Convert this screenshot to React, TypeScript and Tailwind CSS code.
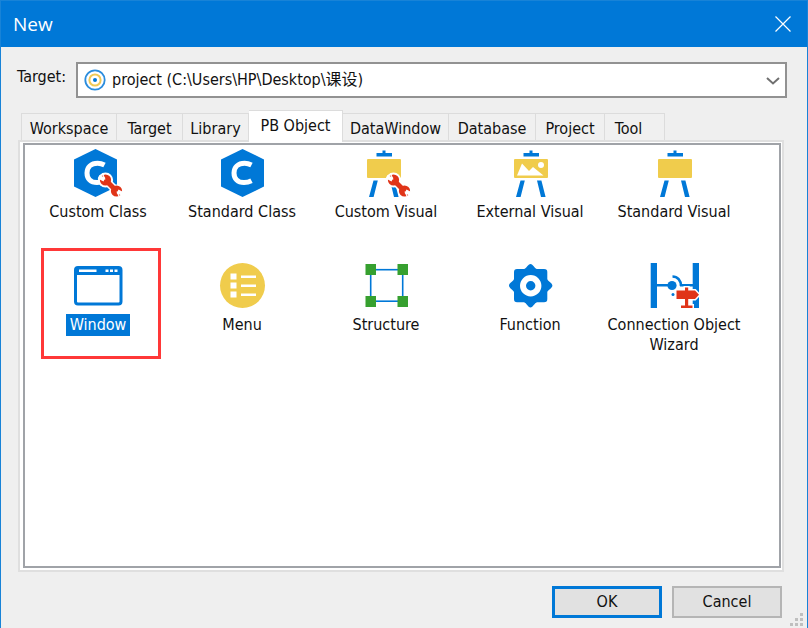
import { useState } from 'react'
import type { ReactNode } from 'react'
import clsx from 'clsx'

const BLUE = '#0078d7'
const YELLOW = '#f0cc4c'
const RED = '#e03418'

function Icon({ children }: { children: ReactNode }) {
  return (
    <svg viewBox="0 0 48 48" className="h-12 w-12 overflow-visible" aria-hidden="true">
      {children}
    </svg>
  )
}

function Wrench() {
  return (
    <>
      <path d="M31.5 31 L43 42.5" stroke="#fff" strokeWidth="8" />
      <circle cx="31.5" cy="31" r="7.6" fill="#fff" />
      <circle cx="42.5" cy="42" r="6.4" fill="#fff" />
      <circle cx="31.5" cy="31" r="5.6" fill={RED} />
      <circle cx="42.5" cy="42" r="5.6" fill={RED} />
      <path d="M31.5 31 L43 42.5" stroke={RED} strokeWidth="5" />
      <path d="M24.6 27.8 L30.4 30.6 M49.4 45.2 L43.6 42.4" stroke="#fff" strokeWidth="4" />
      <path d="M28.4 24.5 L31 30.4 M45.6 48.5 L43 42.6" stroke="#fff" strokeWidth="1.2" />
    </>
  )
}

function Hexagon({ x }: { x: number }) {
  return (
    <g transform={`translate(${x} 0)`}>
      <path d="M21.5 0 L43 10.5 V37.5 L21.5 48 L0 37.5 V10.5 Z" fill={BLUE} />
      <path
        d="M30.5 16 C28.2 14.8 26 14.2 23.6 14.2 C17 14.2 13 18.4 13 24 C13 30 16.8 33.6 23 33.6 C25.8 33.6 28.2 33 30.5 31.8"
        fill="none"
        stroke="#fff"
        strokeWidth="5"
      />
    </g>
  )
}

function Easel({ x, children }: { x: number; children?: ReactNode }) {
  return (
    <g transform={`translate(${x} 0)`}>
      <path d="M15.5 1.5 H18.5 V4 H25 V7.5 H9.5 V4 H15.5 Z" fill={BLUE} />
      <rect x="0" y="10" width="34" height="19" rx="1" fill={YELLOW} />
      <path d="M6.5 31.5 H10.8 L6.6 48 H2 Z M23 31.5 H27.4 L31.6 48 H27 Z" fill={BLUE} />
      {children}
    </g>
  )
}

const items: { name: string; icon: ReactNode }[] = [
  {
    name: 'Custom Class',
    icon: (
      <>
        <Hexagon x={0} />
        <Wrench />
      </>
    ),
  },
  { name: 'Standard Class', icon: <Hexagon x={3} /> },
  {
    name: 'Custom Visual',
    icon: (
      <>
        <Easel x={5} />
        <Wrench />
      </>
    ),
  },
  {
    name: 'External Visual',
    icon: (
      <Easel x={8}>
        <path d="M3 26.5 L8 14.5 L15 22 L19 18 L29.5 26.5 Z" fill="#fff" />
        <circle cx="27" cy="16" r="3" fill="#fff" />
      </Easel>
    ),
  },
  { name: 'Standard Visual', icon: <Easel x={8} /> },
  {
    name: 'Window',
    icon: (
      <>
        <rect x="1.5" y="5.5" width="45.5" height="36.5" rx="2.5" fill="#fff" stroke={BLUE} strokeWidth="3" />
        <rect x="1.5" y="5" width="45.5" height="8" fill={BLUE} />
        <path d="M5 7.5 H22.5 V10 H5 Z M31.5 7.5 H34.5 V10 H31.5 Z M36 7.5 H39 V10 H36 Z M40.5 7.5 H43.5 V10 H40.5 Z" fill="#fff" />
      </>
    ),
  },
  {
    name: 'Menu',
    icon: (
      <>
        <circle cx="24.5" cy="23.5" r="22.5" fill={YELLOW} />
        <path
          d="M12.5 11.5 H18.5 V17.5 H12.5 Z M12.5 20.5 H18.5 V26.5 H12.5 Z M12.5 29.5 H18.5 V35.5 H12.5 Z M23 13.5 H38 V16 H23 Z M23 22.5 H38 V25 H23 Z M23 31.5 H38 V34 H23 Z"
          fill="#fff"
        />
      </>
    ),
  },
  {
    name: 'Structure',
    icon: (
      <>
        <rect x="8.7" y="7.7" width="32" height="31.5" fill="none" stroke={BLUE} strokeWidth="1.6" />
        <path d="M3.5 2 H14 V13 H3.5 Z M35.5 2 H46 V13 H35.5 Z M3.5 34 H14 V45 H3.5 Z M35.5 34 H46 V45 H35.5 Z" fill="#36a02f" />
      </>
    ),
  },
  {
    name: 'Function',
    icon: (
      <>
        <path
          d="M24.5 2 C27 2 28.5 6.5 31 7 H38 C40.5 7 41.3 8 41.3 10 V17 C42 19.5 46.4 21 46.4 23.6 C46.4 26.2 42 28 41.3 30 V37 C41.3 39.4 40.5 40.3 38 40.3 H31 C28.5 41 27 45.4 24.5 45.4 C22 45.4 20.5 41 18 40.3 H11 C9 40.3 8 39.4 8 37 V30 C7.2 28 3 26.2 3 23.6 C3 21 7.2 19.5 8 17 V10 C8 8 9 7 11 7 H18 C20.5 6.5 22 2 24.5 2 Z"
          fill={BLUE}
        />
        <circle cx="24.7" cy="23.7" r="7.7" fill={BLUE} stroke="#fff" strokeWidth="6" />
      </>
    ),
  },
  {
    name: 'Connection Object Wizard',
    icon: (
      <>
        <path d="M0.7 1 H7 V46 H0.7 Z M42.7 1 H49 V46 H42.7 Z M7 22 H18 V24.5 H7 Z M30 22 H43 V24.5 H30 Z" fill={BLUE} />
        <circle cx="22" cy="23.5" r="4.6" fill={BLUE} />
        <path d="M22.5 14.5 C27.5 14.5 31 18.5 31 24" fill="none" stroke={BLUE} strokeWidth="2.6" />
        <circle cx="23" cy="32.5" r="1.5" fill={BLUE} />
        <path
          d="M26.5 28.5 H35 V25.5 H38.2 V28.5 H45 L49 32.7 L45 37 H38.2 V43.5 H42.5 V46 H31 V43.5 H35 V37 H26.5 Z"
          fill={RED}
          stroke="#fff"
          strokeWidth="3"
          paintOrder="stroke"
        />
      </>
    ),
  },
]

const tabs = [
  { name: 'Workspace', width: 'w-24' },
  { name: 'Target', width: 'w-[66px]' },
  { name: 'Library', width: 'w-[66px]' },
  { name: 'PB Object', width: 'w-[94px]' },
  { name: 'DataWindow', width: 'w-[106px]' },
  { name: 'Database', width: 'w-[87px]' },
  { name: 'Project', width: 'w-[69px]' },
  { name: 'Tool', width: 'w-[60px]' },
]

export default function App() {
  const [tab, setTab] = useState('PB Object')
  const [selected, setSelected] = useState('Window')

  return (
    <div className="relative flex min-h-screen flex-col border-x border-[#1883d7] bg-[#efefef] font-['DejaVu_Sans_Condensed','Noto_Sans_CJK_SC',sans-serif] text-base text-[#111]">
      <header className="flex h-[47px] items-center justify-between border-t border-[#1883d7] bg-[#0078d7] pr-4 pl-3 text-white">
        <h1 className="font-['Open_Sans',sans-serif] text-[19px] leading-6">New</h1>
        <button aria-label="Close">
          <svg viewBox="0 0 16 16" className="h-4 w-4" aria-hidden="true">
            <path d="M0.5 0.5 L15.5 15.5 M15.5 0.5 L0.5 15.5" stroke="#fff" strokeWidth="1.2" />
          </svg>
        </button>
      </header>

      <main className="flex flex-1 flex-col pt-[15px] pr-5 pb-[10px] pl-4">
        <div className="flex">
          <label htmlFor="target" className="w-[59px] pt-[5px] leading-5">
            Target:
          </label>
          <div className="relative flex-1">
            <select
              id="target"
              className="h-9 w-full appearance-none border-2 border-[#929292] bg-white pl-[34px] outline-none"
            >
              <option>project (C:\Users\HP\Desktop\课设)</option>
            </select>
            <svg viewBox="0 0 22 22" className="pointer-events-none absolute top-[7px] left-2 h-[22px] w-[22px]" aria-hidden="true">
              <circle cx="11" cy="11" r="9.7" fill="#fff" stroke="#2b8ddd" strokeWidth="1.8" />
              <circle cx="11" cy="11" r="5.6" fill="none" stroke="#f0c956" strokeWidth="2" />
              <circle cx="11" cy="11" r="2" fill={BLUE} />
            </svg>
            <svg viewBox="0 0 14 8" className="pointer-events-none absolute top-[15px] right-[7px] h-2 w-[14px]" aria-hidden="true">
              <path d="M1 1 L7 6.5 L13 1" fill="none" stroke="#707070" strokeWidth="2" />
            </svg>
          </div>
        </div>

        <div role="tablist" className="mt-3 flex items-end pl-1">
          {tabs.map(({ name, width }, i) => (
            <button
              key={name}
              role="tab"
              aria-selected={tab === name}
              onClick={() => setTab(name)}
              className={clsx(
                'border-t border-r border-[#dcdcdc] text-center leading-5',
                width,
                i === 0 && 'border-l',
                tab === name ? 'relative -mb-[2px] h-8 bg-white pb-[2px]' : 'h-[27px] bg-[#f0f0f0] pt-1',
                name === 'Tool' && 'pr-3',
              )}
            >
              {name}
            </button>
          ))}
        </div>

        <div className="mr-[3px] ml-px flex flex-1 flex-col border-2 border-[#dfdfdf] bg-white pt-px pr-px pb-[2px] pl-[3px]">
          <div
            role="tabpanel"
            className="grid flex-1 grid-cols-[repeat(auto-fill,144px)] content-start gap-y-4 border-2 border-[#a0a3a8] pt-1 pl-px"
          >
            {items.map(({ name, icon }) => (
              <button
                key={name}
                onClick={() => setSelected(name)}
                className="relative flex min-h-[97px] flex-col items-center gap-1 text-center leading-5"
              >
                <Icon>{icon}</Icon>
                <span className={clsx('px-1 py-px', selected === name && 'bg-[#0078d7] text-white')}>{name}</span>
                {selected === name && (
                  <span className="pointer-events-none absolute -top-[14px] left-[15px] h-[111px] w-[120px] border-3 border-[#ff3838]" />
                )}
              </button>
            ))}
          </div>
        </div>

        <div className="mt-[14px] flex justify-end gap-[10px] pr-[5px]">
          <button className="h-8 w-[110px] border-3 border-[#0078d7] bg-[#e1e1e1]">OK</button>
          <button className="h-8 w-[110px] border-2 border-[#b5b5b5] bg-[#e1e1e1]">Cancel</button>
        </div>
      </main>

      <svg viewBox="0 0 13 13" className="absolute right-1 bottom-[2px] h-[13px] w-[13px]" aria-hidden="true">
        <path
          d="M10 0 H13 V3 H10 Z M5 5 H8 V8 H5 Z M10 5 H13 V8 H10 Z M0 10 H3 V13 H0 Z M5 10 H8 V13 H5 Z M10 10 H13 V13 H10 Z"
          fill="#bfbfbf"
        />
      </svg>
    </div>
  )
}
